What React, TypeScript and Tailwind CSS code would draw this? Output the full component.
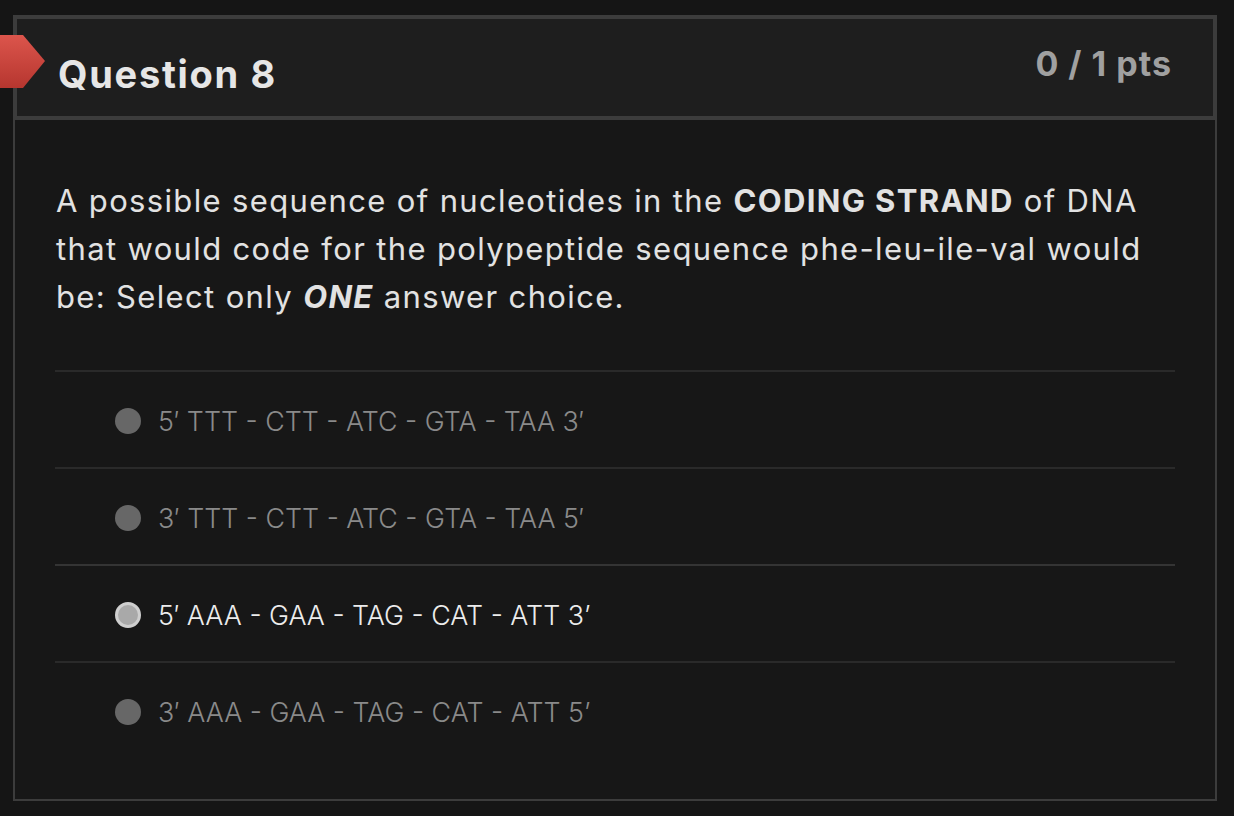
import React from 'react';

const options = [
  { text: '5′ TTT - CTT - ATC - GTA - TAA 3′', selected: false },
  { text: '3′ TTT - CTT - ATC - GTA - TAA 5′', selected: false },
  { text: '5′ AAA - GAA - TAG - CAT - ATT 3’', selected: true },
  { text: '3′ AAA - GAA - TAG - CAT - ATT 5’', selected: false },
];

const App: React.FC = () => {
  return (
    <div className="relative w-[1234px] h-[816px] overflow-hidden bg-[#151515] pt-[15px] pl-[13px] font-['Inter','Noto_Sans',sans-serif]">
      {/* Question flag */}
      <svg className="absolute left-0 top-[35px]" width="46" height="54" viewBox="0 0 46 54">
        <defs>
          <linearGradient id="flag" x1="0" y1="0" x2="0" y2="1">
            <stop offset="0" stopColor="#dc554c" />
            <stop offset="1" stopColor="#b6362f" />
          </linearGradient>
        </defs>
        <polygon points="0,0 23,0 45,26 23,53 0,53" fill="url(#flag)" />
      </svg>

      <div className="w-[1204px] h-[786px] border-2 border-[#3c3c3c] bg-[#171717] flex flex-col">
        {/* Header */}
        <div className="h-[105px] -mt-[2px] -mx-[2px] border-[4px] border-[#3c3c3c] bg-[#1e1e1e] flex justify-between items-start">
          <h2 className="mt-[36px] ml-[41px] text-[38px] leading-none font-bold tracking-[1.7px] text-[#e6e6e6]">Question 8</h2>
          <div className="mt-[28px] mr-[41px] text-[34px] leading-none font-bold tracking-[1px] text-[#a0a0a0]">0 / 1 pts</div>
        </div>

        {/* Body */}
        <div className="px-[40px]">
          <p className="mt-[57px] ml-[1px] text-[31px] leading-[48px] tracking-[1.35px] text-[#e2e2e2]">
            A possible sequence of nucleotides in the <b className="font-bold">CODING STRAND</b> of DNA that would
            code for the polypeptide sequence phe-leu-ile-val would be: Select only{' '}
            <b className="font-bold italic">ONE</b> answer choice.
          </p>

          <ul className="mt-[49px]">
            {options.map((o) => (
              <li
                key={o.text}
                className={`h-[97px] border-t-2 flex items-center pl-[60px] ${
                  o.selected ? 'border-[#343434]' : 'border-[#2a2a2a]'
                }`}
              >
                <span
                  className={`mt-[2px] w-[26px] h-[26px] rounded-full shrink-0 ${
                    o.selected ? 'border-[3px] border-[#cfcfcf] bg-[#a9a9a9]' : 'bg-[#676767]'
                  }`}
                />
                <span
                  className={`ml-[17px] pt-[4px] text-[26.8px] font-light leading-none ${
                    o.selected ? 'text-[#ececec]' : 'text-[#8a8a8a]'
                  }`}
                >
                  {o.text}
                </span>
              </li>
            ))}
          </ul>
        </div>
      </div>
    </div>
  );
};

export default App;
